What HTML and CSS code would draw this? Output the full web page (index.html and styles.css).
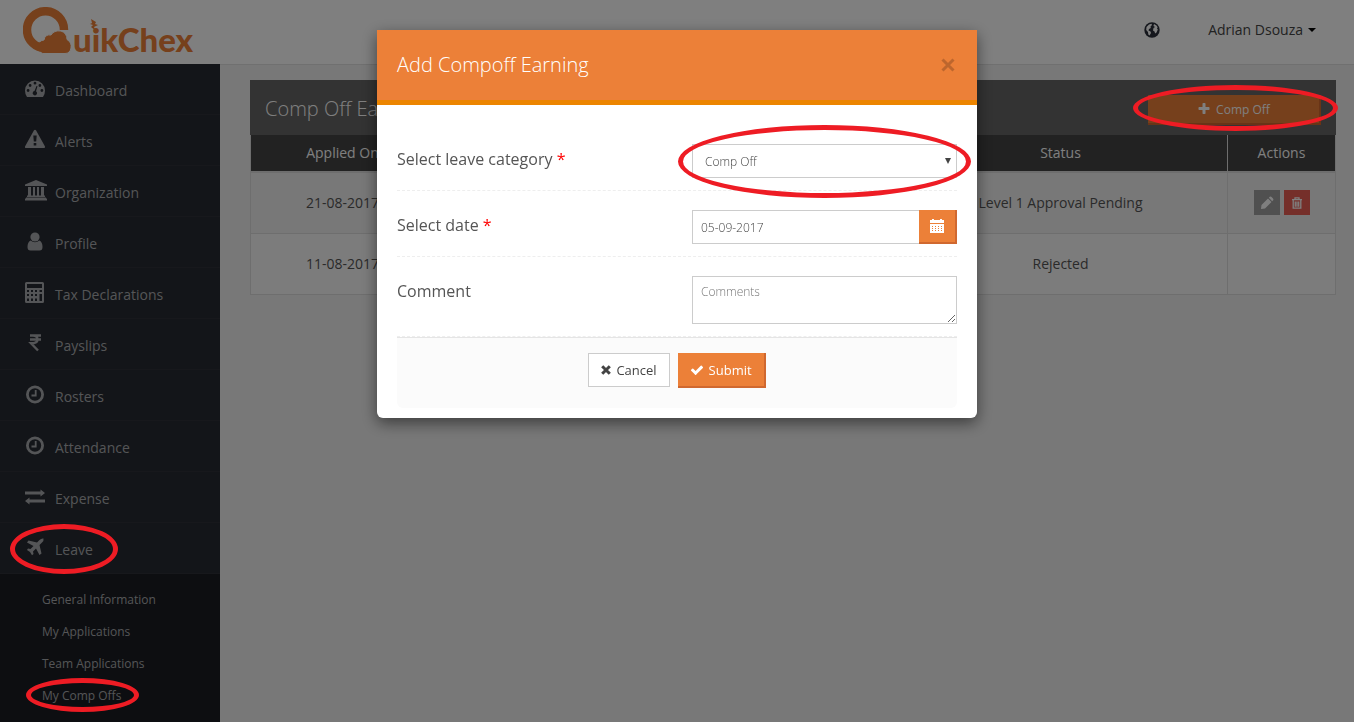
FILE: index.html
```html
<!DOCTYPE html>
<html lang="en">
<head>
    <meta charset="UTF-8">
    <meta name="viewport" content="width=device-width, initial-scale=1.0">
    <title>QuikChex - My Comp Offs</title>
    <link rel="stylesheet" href="styles.css">
</head>
<body>
    <header class="topbar">
        <a href="#" class="logo" aria-label="QuikChex">
            <svg class="logo-mark" width="50" height="48" viewBox="0 0 50 48">
                <path fill="none" stroke="currentColor" stroke-width="8.5" d="M41 23A18.5 18.5 0 1 0 23 41.200"/>
                <path fill="currentColor" stroke="#fff" stroke-width="1" d="M20 46.500A8 8 0 0 1 16 36.500Q17 33 21 33Q22 27 28 28Q31 23 38 24Q44 26 44 32.500Q49 35.500 48 41Q47 46.500 42 46.500Z"/>
                <path fill="currentColor" d="M14 36L21 34L24 46H20Q13 43 12 39Z"/>
            </svg>
            <span class="logo-text">uikChex</span>
            <svg class="logo-spark" width="8" height="12" viewBox="0 0 8 12"><path fill="currentColor" d="M1 0L6 3L5 5L8 6L4 8L6 12L1 8L3 6L0 5L2 4Z"/></svg>
        </a>
        <nav class="topnav">
            <a href="#" aria-label="Language">
                <svg width="16" height="16" viewBox="0 0 16 16">
                    <circle cx="8" cy="8" r="7.700" fill="#2b2f3a"/>
                    <path fill="#fff" d="M5 2.500L7.500 1.800L8 3L6.500 4.500L6.800 6L5 7L4.500 8.500L6.500 9.500L7 11L5.500 13.500L4.300 12.500L4 10L2.200 8L2.500 5ZM10 2L12.500 3.500L13.800 5.500L12.800 6L13.800 7.500L12.500 10.500L11.200 11.500L10.500 9.500L9 8.500L9.500 6L11 5L9.500 4Z"/>
                </svg>
            </a>
            <a href="#" class="user">Adrian Dsouza <span class="caret"></span></a>
        </nav>
    </header>

    <div class="page">
        <aside class="sidebar">
            <ul class="menu">
                <li><a href="#">
                    <svg class="icon" viewBox="0 0 22 22"><path fill="currentColor" fill-rule="evenodd" d="M2 19Q0 16.500 0 12.500A10 10 0 0 1 20 12.500Q20 16.500 18 19ZM4.500 12.500a1.400 1.400 0 1 0-2.800 0a1.400 1.400 0 1 0 2.800 0M6.500 7.500a1.400 1.400 0 1 0-2.800 0a1.400 1.400 0 1 0 2.800 0M11.400 5.200a1.400 1.400 0 1 0-2.800 0a1.400 1.400 0 1 0 2.800 0M16.300 7.500a1.400 1.400 0 1 0-2.800 0a1.400 1.400 0 1 0 2.800 0M18.300 12.500a1.400 1.400 0 1 0-2.800 0a1.400 1.400 0 1 0 2.800 0M11.500 8L9.500 13A2.200 2.200 0 1 0 11 13.300L12.500 8.300Z"/></svg>
                    <span>Dashboard</span></a></li>
                <li><a href="#">
                    <svg class="icon" viewBox="0 0 22 22"><path fill="currentColor" fill-rule="evenodd" d="M9 1.300Q10 0 11 1.300L20 17.500Q20.300 19 19 19H1Q-.3 19 0 17.500ZM8.300 6.500L8.800 12.500H11.200L11.700 6.500ZM8.700 14V16.500H11.300V14Z"/></svg>
                    <span>Alerts</span></a></li>
                <li><a href="#">
                    <svg class="icon" viewBox="0 0 22 22"><path fill="currentColor" d="M11 0L22 4.500V6H0V4.500ZM3 7H6V15.500H8V7H10V15.500H12V7H14V15.500H16V7H19V15.500H20V17H2V15.500H3ZM1 17.500H21V18.500H22V20.500H0V18.500H1Z"/></svg>
                    <span>Organization</span></a></li>
                <li><a href="#">
                    <svg class="icon" viewBox="0 0 22 22"><circle cx="10" cy="6" r="4.600" fill="currentColor"/><path fill="currentColor" d="M5.500 9.500Q10 13 14.500 9.500Q17.500 11 17.500 16Q17.500 19.500 14.500 19.500H5.500Q2.500 19.500 2.500 16Q2.500 11 5.500 9.500Z"/></svg>
                    <span>Profile</span></a></li>
                <li><a href="#">
                    <svg class="icon" viewBox="0 0 22 22"><path fill="currentColor" fill-rule="evenodd" d="M1.500 0H17.500Q19 0 19 1.500V19.500Q19 21 17.500 21H1.500Q0 21 0 19.500V1.500Q0 0 1.500 0ZM2 2V6H17V2ZM2 8V10H4V8ZM6 8V10H8V8ZM10 8V10H12V8ZM14.500 8V10H17V8ZM2 12V14H4V12ZM6 12V14H8V12ZM10 12V14H12V12ZM2 16.500V19H4V16.500ZM6 16.500V19H8V16.500ZM10 16.500V19H12V16.500ZM14.500 12V19H17V12Z"/></svg>
                    <span>Tax Declarations</span></a></li>
                <li><a href="#">
                    <svg class="icon" viewBox="0 0 22 22"><path fill="none" stroke="currentColor" stroke-width="2.400" d="M5 2.500H16M5 6.500H16M5 2.500H8Q12.500 2.500 12.500 6.500Q12.500 10.300 6 10.300L13 17.500"/></svg>
                    <span>Payslips</span></a></li>
                <li><a href="#">
                    <svg class="icon" viewBox="0 0 22 22"><circle cx="10" cy="10.500" r="7.600" fill="none" stroke="currentColor" stroke-width="2.800"/><path fill="none" stroke="currentColor" stroke-width="1.800" d="M10.700 6V11.500H6.500"/></svg>
                    <span>Rosters</span></a></li>
                <li><a href="#">
                    <svg class="icon" viewBox="0 0 22 22"><circle cx="10" cy="10.500" r="7.600" fill="none" stroke="currentColor" stroke-width="2.800"/><path fill="none" stroke="currentColor" stroke-width="1.800" d="M10.700 6V11.500H6.500"/></svg>
                    <span>Attendance</span></a></li>
                <li><a href="#">
                    <svg class="icon" viewBox="0 0 22 22"><path fill="currentColor" d="M0 5.500H15.500V3.500L20 7L15.500 10.500V8.500H0ZM20 13.500H4.500V11.500L0 15L4.500 18.500V16.500H20Z"/></svg>
                    <span>Expense</span></a></li>
                <li><a href="#">
                    <svg class="icon" viewBox="0 0 22 22"><path fill="currentColor" d="M18.500 1.500Q19 3.500 17 5.500L14.500 8L16.500 16.500L14.500 18L11 11.500L8 14.500L8.500 17L7 18.200L5 15L2 13L3 11.500L5.500 12L8.500 9L2 5.500L3.500 3.500L12 5.500L14.500 3Q16.500 1 18.500 1.500Z"/></svg>
                    <span>Leave</span></a>
                    <span class="mark mark-leave"></span>
                </li>
            </ul>
            <ul class="submenu">
                <li><a href="#">General Information</a></li>
                <li><a href="#">My Applications</a></li>
                <li><a href="#">Team Applications</a></li>
                <li><a href="#">My Comp Offs</a><span class="mark mark-compoffs"></span></li>
            </ul>
        </aside>

        <main class="content">
            <div class="panel-head">
                <h1>Comp Off Earnings</h1>
                <div class="add-wrap">
                    <button type="button" class="btn btn-orange btn-add">
                        <svg width="14" height="14" viewBox="0 0 1792 1792"><path fill="currentColor" d="M1600 736v192q0 40-28 68t-68 28h-416v416q0 40-28 68t-68 28h-192q-40 0-68-28t-28-68v-416h-416q-40 0-68-28t-28-68v-192q0-40 28-68t68-28h416v-416q0-40 28-68t68-28h192q40 0 68 28t28 68v416h416q40 0 68 28t28 68z"/></svg>
                        Comp Off
                    </button>
                    <span class="mark mark-add"></span>
                </div>
            </div>
            <table class="earnings">
                <thead>
                    <tr>
                        <th class="col-applied">Applied On</th>
                        <th></th>
                        <th class="col-status">Status</th>
                        <th class="col-actions">Actions</th>
                    </tr>
                </thead>
                <tbody>
                    <tr>
                        <td>21-08-2017</td>
                        <td></td>
                        <td>Level 1 Approval Pending</td>
                        <td>
                            <div class="actions">
                                <button type="button" class="btn-icon edit" aria-label="Edit">
                                    <svg width="14" height="14" viewBox="0 0 14 14"><path fill="currentColor" d="M1 13L1.500 9L8 2.500L11.500 6L5 12.500ZM8.800 1.800L9.800 .8Q10.800 .2 11.800 1.200L12.800 2.200Q13.800 3.200 13.200 4.200L12.200 5.200Z"/></svg>
                                </button>
                                <button type="button" class="btn-icon delete" aria-label="Delete">
                                    <svg width="12" height="12" viewBox="0 0 12 12"><path fill="none" stroke="currentColor" stroke-width="1.300" d="M1 2.700H11M4 2.500V.8H8V2.500M2.200 3V11.200H9.800V3M4.300 4.500V9.800M6 4.500V9.800M7.700 4.500V9.800"/></svg>
                                </button>
                            </div>
                        </td>
                    </tr>
                    <tr>
                        <td>11-08-2017</td>
                        <td></td>
                        <td>Rejected</td>
                        <td></td>
                    </tr>
                </tbody>
            </table>
        </main>
    </div>

    <div class="backdrop"></div>

    <div class="modal" role="dialog" aria-labelledby="modalTitle">
        <div class="modal-head">
            <h2 id="modalTitle">Add Compoff Earning</h2>
            <button type="button" class="close" aria-label="Close">
                <svg width="14" height="14" viewBox="0 0 14 14"><path stroke="currentColor" stroke-width="3" d="M1.500 1.500L12.500 12.500M12.500 1.500L1.500 12.500"/></svg>
            </button>
        </div>
        <form class="modal-body">
            <div class="row">
                <label for="category">Select leave category <span class="req">*</span></label>
                <div class="field select">
                    <select id="category" name="category">
                        <option>Comp Off</option>
                    </select>
                    <span class="mark mark-select"></span>
                </div>
            </div>
            <div class="row">
                <label for="date">Select date <span class="req">*</span></label>
                <div class="field date">
                    <input type="text" id="date" name="date" value="05-09-2017">
                    <button type="button" class="btn-orange btn-cal" aria-label="Open calendar">
                        <svg width="16" height="14" viewBox="0 0 16 14"><path fill="currentColor" fill-rule="evenodd" d="M1 1H3V0H5V1H11V0H13V1H15V4H1ZM1 5H15V14H1ZM3 7V8H4V7ZM6 7V8H7V7ZM9 7V8H10V7ZM12 7V8H13V7ZM3 9V10H4V9ZM6 9V10H7V9ZM9 9V10H10V9ZM12 9V10H13V9ZM3 11V12H4V11ZM6 11V12H7V11ZM9 11V12H10V11ZM12 11V12H13V11Z"/></svg>
                    </button>
                </div>
            </div>
            <div class="row">
                <label for="comment">Comment</label>
                <div class="field">
                    <textarea id="comment" name="comment" placeholder="Comments"></textarea>
                </div>
            </div>
            <div class="modal-foot">
                <button type="button" class="btn btn-cancel">
                    <svg width="10" height="10" viewBox="0 0 10 10"><path stroke="currentColor" stroke-width="3" d="M1.200 1.200L8.800 8.800M8.800 1.200L1.200 8.800"/></svg>
                    Cancel
                </button>
                <button type="submit" class="btn btn-orange btn-submit">
                    <svg width="14" height="14" viewBox="0 0 1792 1792"><path fill="currentColor" d="M1671 566q0 40-28 68l-724 724-136 136q-28 28-68 28t-68-28l-136-136-362-362q-28-28-28-68t28-68l136-136q28-28 68-28t68 28l294 295 656-657q28-28 68-28t68 28l136 136q28 28 28 68z"/></svg>
                    Submit
                </button>
            </div>
        </form>
    </div>
</body>
</html>
```
FILE: styles.css
```css
* {
    box-sizing: border-box;
}
html, body {
    height: 100%;
}
body {
    margin: 0;
    display: flex;
    flex-direction: column;
    overflow: hidden;
    font-family: "Open Sans", "Noto Sans", sans-serif;
    font-size: 14px;
    line-height: 20px;
    color: #555;
    background-color: #f0f0f0;
}
a {
    color: inherit;
    text-decoration: none;
}
ul {
    list-style: none;
    margin: 0;
    padding: 0;
}
button, input, select, textarea {
    font-family: inherit;
}
svg {
    display: block;
    flex: none;
}

/* top bar */
.topbar {
    display: flex;
    justify-content: space-between;
    align-items: center;
    flex: none;
    height: 64px;
    padding: 0 38px 4px 23px;
    background-color: #fff;
}
.logo {
    position: relative;
    display: flex;
    align-items: center;
    padding-top: 2px;
    color: #ed8038;
}
.logo-text {
    padding-top: 16px;
    font-family: Lato, sans-serif;
    font-size: 33px;
    font-weight: 900;
    line-height: 32px;
}
.logo-spark {
    position: absolute;
    left: 67px;
    top: 14px;
}
.topnav {
    display: flex;
    align-items: center;
    gap: 48px;
}
.user {
    display: flex;
    align-items: center;
    gap: 5px;
    color: #444;
}
.caret {
    border: 4px solid transparent;
    border-top-color: #000;
    border-bottom: 0;
}

/* side menu */
.page {
    display: flex;
    flex: 1;
    min-height: 0;
}
.sidebar {
    display: flex;
    flex-direction: column;
    flex: none;
    width: 220px;
    color: #a9abae;
    background-color: #272a32;
}
.menu li, .submenu li {
    position: relative;
}
.menu a {
    display: flex;
    align-items: center;
    gap: 8px;
    height: 51px;
    padding-left: 25px;
    border-bottom: 1px solid #2e3138;
}
.menu a span {
    padding-top: 4px;
}
.icon {
    width: 22px;
    height: 22px;
}
.submenu {
    flex: 1;
    padding: 10px 0;
    font-size: 12px;
    background-color: #1b1d23;
}
.submenu a {
    display: block;
    padding-left: 42px;
    line-height: 32px;
}

/* earnings table */
.content {
    flex: 1;
    padding: 15px 18px 0 30px;
    border-top: 1px solid #e0e0e0;
}
.panel-head {
    display: flex;
    justify-content: space-between;
    height: 55px;
    padding: 15px 15px 0;
    color: #fff;
    background-color: #666;
}
.panel-head h1 {
    margin: 0;
    font-size: 20px;
    font-weight: 300;
    line-height: 28px;
}
.add-wrap {
    position: relative;
}
.btn {
    display: flex;
    align-items: center;
    justify-content: center;
    gap: 5px;
    height: 34px;
    padding: 0 12px;
    border: 1px solid #ccc;
    font-size: 13px;
    cursor: pointer;
}
.btn-orange {
    color: #fff;
    background-color: #ec8038;
    border: solid #d0682f;
    border-width: 0 2px 2px 0;
}
.btn-add {
    width: 173px;
    height: 30px;
    font-size: 12px;
}
.earnings {
    width: 100%;
    table-layout: fixed;
    border-collapse: collapse;
    text-align: center;
}
.earnings th {
    height: 37px;
    padding: 0;
    font-weight: 400;
    color: #fff;
    background-color: #444;
    border: 1px solid #ddd;
    border-top: 0;
    border-bottom-width: 2px;
}
.earnings td {
    height: 61px;
    padding: 0;
    border: 1px solid #ddd;
}
.earnings tbody tr:nth-child(even) {
    background-color: #f9f9f9;
}
.col-applied {
    width: 184px;
}
.col-status {
    width: 334px;
}
.col-actions {
    width: 108px;
}
.actions {
    display: flex;
    justify-content: center;
    gap: 4px;
}
.btn-icon {
    display: flex;
    align-items: center;
    justify-content: center;
    width: 26px;
    height: 25px;
    padding: 0;
    border: 0;
    color: #fff;
    cursor: pointer;
}
.edit {
    background-color: #a0a0a0;
}
.delete {
    background-color: #ea5f55;
}

/* modal */
.backdrop {
    position: fixed;
    inset: 0;
    z-index: 10;
    background-color: rgba(0,0,0,0.5);
}
.modal {
    position: fixed;
    top: 30px;
    left: 0;
    right: 0;
    z-index: 20;
    width: 600px;
    max-width: 100%;
    margin: 0 auto;
    background-color: #fff;
    border-radius: 0 0 6px 6px;
    box-shadow: 0 5px 15px rgba(0,0,0,0.5);
}
.modal-head {
    display: flex;
    justify-content: space-between;
    align-items: center;
    height: 75px;
    padding: 0 22px 0 20px;
    color: #fff;
    background-color: #ec8038;
    border-bottom: 5px solid #ec8500;
}
.modal-head h2 {
    margin: 0;
    font-size: 20px;
    font-weight: 300;
}
.close {
    padding: 0;
    border: 0;
    color: #bd662d;
    background: none;
    cursor: pointer;
}
.modal-body {
    padding: 20px 20px 10px;
}
.row {
    display: flex;
    justify-content: space-between;
    padding: 19px 0 12px;
    border-bottom: 1px dashed #eee;
}
.row label {
    font-size: 16px;
    line-height: 30px;
}
.req {
    color: #f00;
}
.field {
    position: relative;
    display: flex;
    width: 265px;
}
.field input, .field select, .field textarea {
    flex: 1;
    min-width: 0;
    height: 34px;
    padding: 0 8px;
    border: 1px solid #ccc;
    border-radius: 0;
    font-size: 12px;
    font-weight: 300;
    color: #444;
    background-color: #fff;
}
.field select {
    appearance: none;
    padding: 0 12px;
}
.select::after {
    content: "";
    position: absolute;
    right: 6px;
    top: 14px;
    border: 3px solid transparent;
    border-top: 6px solid #444;
    border-bottom: 0;
}
.field textarea {
    height: 48px;
    padding: 6px 8px;
}
.field textarea::placeholder {
    color: #777;
}
.field.date input {
    border-right: 0;
}
.btn-cal {
    display: flex;
    align-items: center;
    justify-content: center;
    width: 38px;
    padding: 0;
    cursor: pointer;
}
.modal-foot {
    display: flex;
    justify-content: center;
    align-items: flex-start;
    gap: 8px;
    height: 71px;
    padding: 15px 0;
    background-color: #fbfbfb;
    border-top: 1px solid #e5e5e5;
    border-radius: 0 0 6px 6px;
}
.btn-cancel {
    color: #444;
    background-color: #fff;
}
.btn-submit {
    height: 35px;
}

/* red rings round the steps to follow */
.mark {
    position: absolute;
    z-index: 30;
    border: 5px solid #ee1c24;
    border-radius: 50%;
    pointer-events: none;
}
.mark-leave {
    left: 10px;
    top: 1px;
    width: 108px;
    height: 50px;
}
.mark-compoffs {
    left: 26px;
    top: -2px;
    width: 113px;
    height: 34px;
}
.mark-add {
    left: -15px;
    top: -10px;
    width: 205px;
    height: 46px;
}
.mark-select {
    left: -14px;
    top: -19px;
    width: 293px;
    height: 73px;
}
```
